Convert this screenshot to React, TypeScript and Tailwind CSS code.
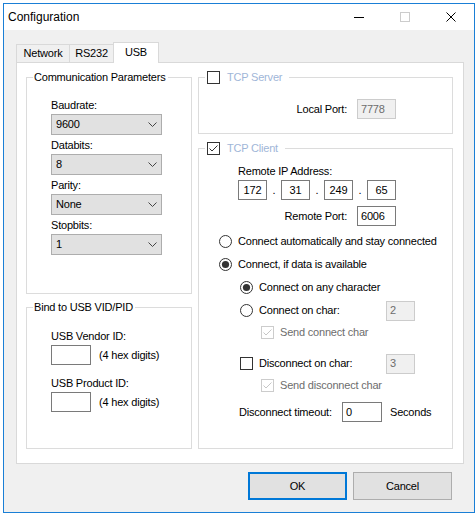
import React from 'react';

const FONT = "font-['Liberation_Sans',Arial,sans-serif]";

const CheckBox: React.FC<{ checked?: boolean; disabled?: boolean }> = ({ checked, disabled }) => (
  <span
    className={`flex h-[13px] w-[13px] shrink-0 items-center justify-center border bg-white ${
      disabled ? 'border-[#cccccc]' : 'border-[#333333]'
    }`}
  >
    {checked && (
      <svg viewBox="0 0 11 11" className="h-[11px] w-[11px]" fill="none" stroke={disabled ? '#c6c6c6' : '#333333'} strokeWidth="1">
        <path d="M1.5 5.5 L4 8 L9.5 2.5" />
      </svg>
    )}
  </span>
);

const Radio: React.FC<{ checked?: boolean }> = ({ checked }) => (
  <svg viewBox="0 0 13 13" className="h-[13px] w-[13px] shrink-0" aria-hidden="true">
    <circle cx="6.5" cy="6.5" r="6" fill="white" stroke="#333333" strokeWidth="1" />
    {checked && <circle cx="6.5" cy="6.5" r="3.6" fill="#333333" />}
  </svg>
);

const TextBox: React.FC<{ value?: string; className?: string; center?: boolean; disabled?: boolean }> = ({
  value,
  className,
  center,
  disabled
}) => (
  <span
    className={`flex h-[20px] shrink-0 items-center border ${
      disabled ? 'border-[#cccccc] bg-[#f0f0f0] text-[#6d6d6d]' : 'border-[#7a7a7a] bg-white text-black'
    } ${center ? 'justify-center' : 'pl-[3px]'} ${className ?? ''}`}
  >
    {value}
  </span>
);

const Combo: React.FC<{ label: string; value: string }> = ({ label, value }) => (
  <div className="flex flex-col">
    <span className="h-[15px] leading-[15px]">{label}</span>
    <div className="mt-[1px] flex h-[21px] w-[111px] items-center justify-between border border-[#adadad] bg-[#e1e1e1] pl-[4px] pr-[4px]">
      <span>{value}</span>
      <svg viewBox="0 0 9 5" className="h-[5px] w-[9px]" aria-hidden="true">
        <path d="M0.5 0.5 L4.5 4.5 L8.5 0.5" fill="none" stroke="#444444" strokeWidth="1" />
      </svg>
    </div>
  </div>
);

const GroupBox: React.FC<{ legend: React.ReactNode; className?: string; children?: React.ReactNode }> = ({
  legend,
  className,
  children
}) => (
  <fieldset className={`border border-[#dcdcdc] ${className ?? ''}`}>
    <legend className="ml-[6px] pl-[1px] pr-[2px]">
      <span className="flex h-[14px] items-center leading-[14px]">{legend}</span>
    </legend>
    {children}
  </fieldset>
);

const CheckLegend: React.FC<{ label: string; checked?: boolean }> = ({ label, checked }) => (
  <span className="flex items-center gap-[7px] pl-[1px] pr-[5px]">
    <CheckBox checked={checked} />
    <span className="text-[#9fb6d8]">{label}</span>
  </span>
);

const TitleBar: React.FC = () => (
  <div className="flex h-[26px] items-center justify-between bg-white">
    <span className="pl-[4px] text-[12px] tracking-normal text-black">Configuration</span>
    <div className="flex h-full">
      <span className="flex h-full w-[46px] items-center justify-center">
        <span className="h-px w-[10px] bg-black" />
      </span>
      <span className="flex h-full w-[46px] items-center justify-center">
        <span className="h-[10px] w-[10px] border border-[#cccccc]" />
      </span>
      <span className="flex h-full w-[46px] items-center justify-center">
        <svg viewBox="0 0 10 10" className="h-[10px] w-[10px]" aria-hidden="true">
          <path d="M0.5 0.5 L9.5 9.5 M9.5 0.5 L0.5 9.5" stroke="black" strokeWidth="1" />
        </svg>
      </span>
    </div>
  </div>
);

const Tabs: React.FC = () => (
  <div className="flex h-[20px] items-end">
    <span className="flex h-[18px] w-[54px] items-center justify-center border border-b-0 border-[#d9d9d9] bg-[#f0f0f0]">
      Network
    </span>
    <span className="flex h-[18px] w-[44px] items-center justify-center border border-b-0 border-l-0 border-[#d9d9d9] bg-[#f0f0f0]">
      RS232
    </span>
    <span className="relative z-10 -mb-[1px] -ml-[1px] flex h-[21px] w-[46px] items-center justify-center border border-b-0 border-[#d9d9d9] bg-white pb-[2px]">
      USB
    </span>
  </div>
);

const HexField: React.FC<{ label: string; className?: string }> = ({ label, className }) => (
  <div className={`flex flex-col ${className ?? ''}`}>
    <span className="h-[15px] leading-[15px]">{label}</span>
    <div className="mt-[1px] flex items-center">
      <TextBox className="w-[40px]" />
      <span className="ml-[8px]">(4 hex digits)</span>
    </div>
  </div>
);

const TcpClient: React.FC = () => (
  <div className="flex flex-col pl-[20px] pt-[9px]">
    <span className="ml-[19px] h-[15px] leading-[15px]">Remote IP Address:</span>
    <div className="ml-[19px] mt-[1px] flex items-center">
      <TextBox value="172" center className="w-[29px]" />
      <span className="w-[14px] text-center">.</span>
      <TextBox value="31" center className="w-[29px]" />
      <span className="w-[14px] text-center">.</span>
      <TextBox value="249" center className="w-[29px]" />
      <span className="w-[14px] text-center">.</span>
      <TextBox value="65" center className="w-[29px]" />
    </div>
    <div className="mt-[6px] flex items-center">
      <span className="w-[128px] text-right">Remote Port:</span>
      <TextBox value="6006" className="ml-[10px] w-[39px]" />
    </div>

    <div className="mt-[4px] flex h-[23px] items-center gap-[6px]">
      <Radio />
      <span>Connect automatically and stay connected</span>
    </div>
    <div className="flex h-[23px] items-center gap-[6px]">
      <Radio checked />
      <span>Connect, if data is available</span>
    </div>
    <div className="ml-[21px] flex h-[23px] items-center gap-[6px]">
      <Radio checked />
      <span>Connect on any character</span>
    </div>
    <div className="ml-[21px] flex h-[23px] items-center gap-[6px]">
      <Radio />
      <span className="w-[127px]">Connect on char:</span>
      <TextBox value="2" disabled className="-ml-[6px] w-[29px]" />
    </div>
    <div className="ml-[42px] flex h-[21px] items-center gap-[6px] text-[#6d6d6d]">
      <CheckBox checked disabled />
      <span>Send connect char</span>
    </div>
    <div className="ml-[21px] mt-[9px] flex h-[23px] items-center gap-[6px]">
      <CheckBox />
      <span className="w-[127px]">Disconnect on char:</span>
      <TextBox value="3" disabled className="-ml-[6px] w-[29px]" />
    </div>
    <div className="ml-[42px] flex h-[21px] items-center gap-[6px] text-[#6d6d6d]">
      <CheckBox checked disabled />
      <span>Send disconnect char</span>
    </div>
    <div className="ml-[20px] mt-[5px] flex h-[22px] items-center">
      <span className="w-[103px]">Disconnect timeout:</span>
      <TextBox value="0" className="w-[40px]" />
      <span className="ml-[8px]">Seconds</span>
    </div>
  </div>
);

export default function App() {
  return (
    <div className={`h-[514px] w-[476px] bg-white pl-[3px] pt-[3px] text-[11px] tracking-[-0.2px] text-black ${FONT}`}>
      <div className="flex h-[510px] w-[472px] flex-col border border-[#1a7fd6]">
        <TitleBar />
        <div className="flex flex-1 flex-col bg-[#f0f0f0] pl-[12px] pt-[12px]">
          <Tabs />
          <div className="flex h-[402px] w-[448px] gap-[6px] border border-[#d9d9d9] bg-white pl-[9px] pt-[7px]">
            <div className="flex w-[166px] flex-col gap-[6px]">
              <GroupBox legend="Communication Parameters" className="h-[224px]">
                <div className="flex flex-col gap-[3px] pl-[24px] pt-[14px]">
                  <Combo label="Baudrate:" value="9600" />
                  <Combo label="Databits:" value="8" />
                  <Combo label="Parity:" value="None" />
                  <Combo label="Stopbits:" value="1" />
                </div>
              </GroupBox>
              <GroupBox legend="Bind to USB VID/PID" className="h-[149px]">
                <div className="flex flex-col pl-[24px] pt-[15px]">
                  <HexField label="USB Vendor ID:" />
                  <HexField label="USB Product ID:" className="mt-[11px]" />
                </div>
              </GroupBox>
            </div>
            <div className="flex w-[255px] flex-col gap-[7px]">
              <GroupBox legend={<CheckLegend label="TCP Server" />} className="h-[64px]">
                <div className="flex items-center pl-[20px] pt-[15px]">
                  <span className="w-[128px] text-right">Local Port:</span>
                  <TextBox value="7778" disabled className="ml-[10px] w-[39px]" />
                </div>
              </GroupBox>
              <GroupBox legend={<CheckLegend label="TCP Client" checked />} className="h-[308px]">
                <TcpClient />
              </GroupBox>
            </div>
          </div>
          <div className="ml-[232px] mt-[8px] flex gap-[6px]">
            <button className="flex h-[28px] w-[99px] items-center justify-center border-2 border-[#0078d7] bg-[#e1e1e1]">
              OK
            </button>
            <button className="flex h-[28px] w-[99px] items-center justify-center border border-[#adadad] bg-[#e1e1e1]">
              Cancel
            </button>
          </div>
        </div>
      </div>
    </div>
  );
}
